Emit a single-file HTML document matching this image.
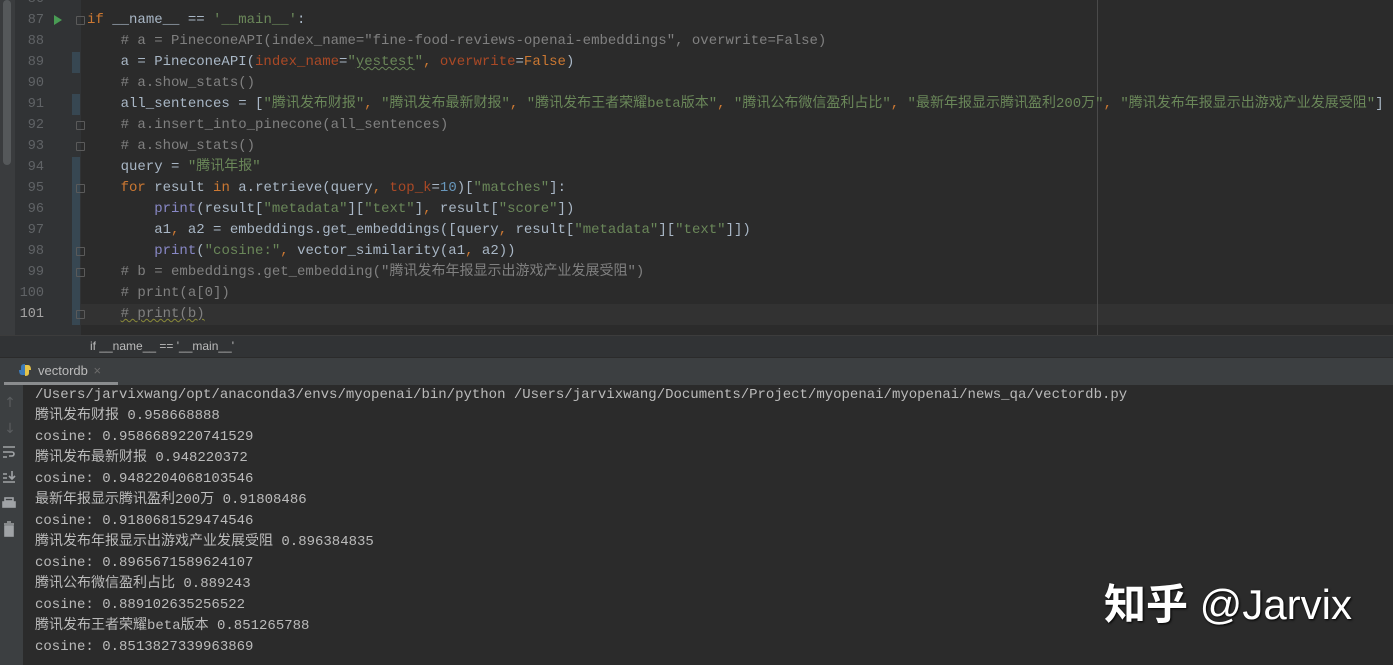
<!DOCTYPE html>
<html><head><meta charset="utf-8">
<style>
*{margin:0;padding:0;box-sizing:border-box}
body{width:1393px;height:665px;overflow:hidden;background:#2b2b2b;position:relative;font-family:"Liberation Mono","Noto Sans CJK SC",monospace;font-size:14px;color:#a9b7c6}
.ab{position:absolute}
.ln{position:absolute;left:0;width:44px;text-align:right;color:#606366;font-size:13.5px;line-height:21px}
.cl{position:absolute;left:87px;white-space:pre;line-height:21px;height:21px}
.k{color:#cc7832}.s{color:#6a8759}.c{color:#808080}.p{color:#aa4926}.n{color:#6897bb}.b{color:#8888c6}.u{text-decoration:underline wavy #6a8759;text-decoration-thickness:1px}
.o{position:absolute;left:35px;white-space:pre;line-height:21px;color:#bbbbbb}
.fold{position:absolute;left:76px;width:9px;height:9px;border:1px solid #5a5a5a;border-radius:1px}
</style></head><body>
<div class="ab" style="left:0;top:0;width:15px;height:335px;background:#3a3c3e"></div>
<div class="ab" style="left:3px;top:0;width:8px;height:165px;background:#55585a;border-radius:4px"></div>
<div class="ab" style="left:15px;top:0;width:66px;height:335px;background:#313335"></div>
<div class="ab" style="left:81px;top:304px;width:1312px;height:21px;background:#323232"></div>
<div class="ab" style="left:1097px;top:0;width:1px;height:335px;background:#4a4a4a"></div>
<div class="ab" style="left:72px;top:52px;width:8px;height:21px;background:#374752"></div>
<div class="ab" style="left:72px;top:94px;width:8px;height:21px;background:#374752"></div>
<div class="ab" style="left:72px;top:157px;width:8px;height:168px;background:#374752"></div>
<div class="ln" style="top:-11px">86</div>
<div class="ln" style="top:10px">87</div><div class="ln" style="top:31px">88</div><div class="ln" style="top:52px">89</div><div class="ln" style="top:73px">90</div><div class="ln" style="top:94px">91</div><div class="ln" style="top:115px">92</div><div class="ln" style="top:136px">93</div><div class="ln" style="top:157px">94</div><div class="ln" style="top:178px">95</div><div class="ln" style="top:199px">96</div><div class="ln" style="top:220px">97</div><div class="ln" style="top:241px">98</div><div class="ln" style="top:262px">99</div><div class="ln" style="top:283px">100</div><div class="ln" style="top:304px;color:#a4a3a3">101</div>
<svg class="ab" style="left:53px;top:14px" width="10" height="12"><path d="M1 1 L9 6 L1 11Z" fill="#499c54"/></svg>
<div class="fold" style="top:16px"></div><div class="fold" style="top:121px"></div><div class="fold" style="top:142px"></div><div class="fold" style="top:184px"></div><div class="fold" style="top:247px"></div><div class="fold" style="top:268px"></div><div class="fold" style="top:310px"></div>
<div class="cl" style="top:10px"><span class="k">if</span> __name__ == <span class="s">'__main__'</span>:</div>
<div class="cl" style="top:31px"><span class="c">    # a = PineconeAPI(index_name="fine-food-reviews-openai-embeddings", overwrite=False)</span></div>
<div class="cl" style="top:52px">    a = PineconeAPI(<span class="p">index_name</span>=<span class="s">"<span class="u">yestest</span>"</span><span class="k">, </span><span class="p">overwrite</span>=<span class="k">False</span>)</div>
<div class="cl" style="top:73px"><span class="c">    # a.show_stats()</span></div>
<div class="cl" style="top:94px">    all_sentences = [<span class="s">"腾讯发布财报"</span><span class="k">, </span><span class="s">"腾讯发布最新财报"</span><span class="k">, </span><span class="s">"腾讯发布王者荣耀beta版本"</span><span class="k">, </span><span class="s">"腾讯公布微信盈利占比"</span><span class="k">, </span><span class="s">"最新年报显示腾讯盈利200万"</span><span class="k">, </span><span class="s">"腾讯发布年报显示出游戏产业发展受阻"</span>]</div>
<div class="cl" style="top:115px"><span class="c">    # a.insert_into_pinecone(all_sentences)</span></div>
<div class="cl" style="top:136px"><span class="c">    # a.show_stats()</span></div>
<div class="cl" style="top:157px">    query = <span class="s">"腾讯年报"</span></div>
<div class="cl" style="top:178px">    <span class="k">for</span> result <span class="k">in</span> a.retrieve(query<span class="k">, </span><span class="p">top_k</span>=<span class="n">10</span>)[<span class="s">"matches"</span>]:</div>
<div class="cl" style="top:199px">        <span class="b">print</span>(result[<span class="s">"metadata"</span>][<span class="s">"text"</span>]<span class="k">, </span>result[<span class="s">"score"</span>])</div>
<div class="cl" style="top:220px">        a1<span class="k">, </span>a2 = embeddings.get_embeddings([query<span class="k">, </span>result[<span class="s">"metadata"</span>][<span class="s">"text"</span>]])</div>
<div class="cl" style="top:241px">        <span class="b">print</span>(<span class="s">"cosine:"</span><span class="k">, </span>vector_similarity(a1<span class="k">, </span>a2))</div>
<div class="cl" style="top:262px"><span class="c">    # b = embeddings.get_embedding("腾讯发布年报显示出游戏产业发展受阻")</span></div>
<div class="cl" style="top:283px"><span class="c">    # print(a[0])</span></div>
<div class="cl" style="top:304px"><span class="c">    <span class="u" style="text-decoration-color:#8a8a3a"># print(b)</span></span></div>
<div class="ab" style="left:0;top:335px;width:1393px;height:22px;background:#313335;border-top:1px solid #3c3c3c"></div>
<div class="ab" style="left:90px;top:339px;font-family:'Liberation Sans',sans-serif;font-size:12px;color:#bbbbbb">if __name__ == '__main__'</div>
<div class="ab" style="left:0;top:357px;width:1393px;height:28px;background:#3c3f41;border-top:1px solid #2b2b2b"></div>
<svg class="ab" style="left:18px;top:363px" width="14" height="14"><path d="M7 1 C3 1 3 3 3 5 L3 7 L1 7 C1 10 2 12 4 12 L7 12" fill="#3d7ab8"/><path d="M7 13 C11 13 11 11 11 9 L11 7 L13 7 C13 4 12 2 10 2 L7 2" fill="#e5c44a"/></svg>
<div class="ab" style="left:38px;top:363px;font-family:'Liberation Sans',sans-serif;font-size:13px;color:#bbbbbb">vectordb <span style="color:#6b6b6b;margin-left:2px">×</span></div>
<div class="ab" style="left:4px;top:382px;width:114px;height:3px;background:#8a8c8e"></div>
<div class="ab" style="left:0;top:385px;width:23px;height:280px;background:#3c3f41"></div>
<div class="ab" style="left:2px;top:390px;color:#5a5d5f;font-family:'DejaVu Sans',sans-serif;font-size:14px;line-height:26px;width:16px;text-align:center">↑<br>↓</div>
<svg class="ab" style="left:2px;top:444px" width="14" height="100" fill="none" stroke="#a0a3a6" stroke-width="1.6"><path d="M1 3H13M1 8H10a2 2 0 0 1 0 4H7M1 13H5"/><path d="M1 30H5M1 34H5M1 38H13M10 27V35M7 32L10 35L13 32"/><rect x="1" y="58" width="12" height="5" fill="#a0a3a6"/><rect x="3" y="54" width="8" height="3"/><path d="M2 80H12M5 78H9"/><rect x="3" y="82" width="8" height="10" fill="#a0a3a6"/></svg>
<div class="o" style="top:385px">/Users/jarvixwang/opt/anaconda3/envs/myopenai/bin/python /Users/jarvixwang/Documents/Project/myopenai/myopenai/news_qa/vectordb.py</div>
<div class="o" style="top:406px">腾讯发布财报 0.958668888</div>
<div class="o" style="top:427px">cosine: 0.9586689220741529</div>
<div class="o" style="top:448px">腾讯发布最新财报 0.948220372</div>
<div class="o" style="top:469px">cosine: 0.9482204068103546</div>
<div class="o" style="top:490px">最新年报显示腾讯盈利200万 0.91808486</div>
<div class="o" style="top:511px">cosine: 0.9180681529474546</div>
<div class="o" style="top:532px">腾讯发布年报显示出游戏产业发展受阻 0.896384835</div>
<div class="o" style="top:553px">cosine: 0.8965671589624107</div>
<div class="o" style="top:574px">腾讯公布微信盈利占比 0.889243</div>
<div class="o" style="top:595px">cosine: 0.889102635256522</div>
<div class="o" style="top:616px">腾讯发布王者荣耀beta版本 0.851265788</div>
<div class="o" style="top:637px">cosine: 0.8513827339963869</div>
<div class="ab" style="left:1104px;top:579px;font-family:'Liberation Sans','Noto Sans CJK SC',sans-serif;font-size:42px;color:#fff;white-space:nowrap;text-shadow:1px 1px 2px #000;line-height:52px"><span style="font-weight:bold">知乎</span> @Jarvix</div>
</body></html>
